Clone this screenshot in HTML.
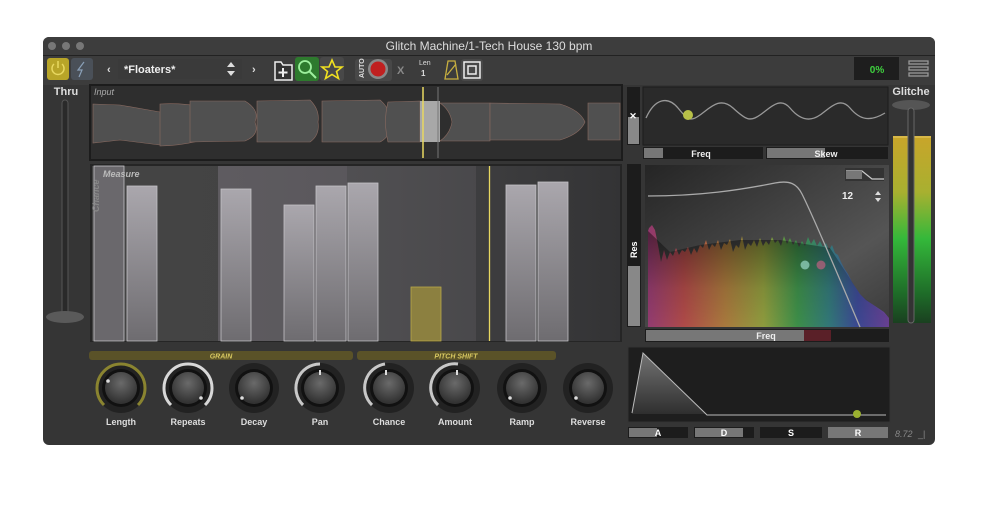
<!DOCTYPE html>
<html><head><style>
body{margin:0;background:#fff;width:987px;height:511px;overflow:hidden}
svg{display:block}
text{font-family:"Liberation Sans",sans-serif}
</style></head><body>
<svg width="987" height="511" viewBox="0 0 987 511">
<defs>
<linearGradient id="rb" x1="0" x2="1" y1="0" y2="0">
<stop offset="0" stop-color="#a03a78"/><stop offset=".15" stop-color="#c04a48"/><stop offset=".32" stop-color="#b8803a"/><stop offset=".48" stop-color="#98a83a"/><stop offset=".62" stop-color="#3a9a48"/><stop offset=".75" stop-color="#2e8080"/><stop offset=".87" stop-color="#3a48a0"/><stop offset="1" stop-color="#7040a0"/>
</linearGradient>
<linearGradient id="rbf" x1="0" x2="0" y1="0" y2="1"><stop offset="0" stop-color="#000" stop-opacity=".45"/><stop offset=".6" stop-color="#000" stop-opacity=".1"/><stop offset="1" stop-color="#000" stop-opacity="0"/></linearGradient>
<linearGradient id="meter" x1="0" x2="0" y1="0" y2="1"><stop offset="0" stop-color="#c9a52a"/><stop offset=".3" stop-color="#a8b030"/><stop offset=".55" stop-color="#34b83a"/><stop offset=".85" stop-color="#1e6a28"/><stop offset="1" stop-color="#1a4020"/></linearGradient>
<linearGradient id="bar" x1="0" x2="0" y1="0" y2="1"><stop offset="0" stop-color="#aaa7ad"/><stop offset="1" stop-color="#6e6c70"/></linearGradient>
<linearGradient id="filt" x1="0" x2="1" y1="0" y2="1"><stop offset="0" stop-color="#252525"/><stop offset=".7" stop-color="#555"/><stop offset="1" stop-color="#3a3a3a"/></linearGradient>
<radialGradient id="kn" cx=".5" cy=".35" r=".6"><stop offset="0" stop-color="#6a6a6a"/><stop offset="1" stop-color="#333"/></radialGradient>
<linearGradient id="adsr" x1="0" x2="0" y1="0" y2="1"><stop offset="0" stop-color="#888"/><stop offset="1" stop-color="#333"/></linearGradient>
<linearGradient id="seg" x1="0" x2="1" y1="0" y2="0"><stop offset="0" stop-color="#fff" stop-opacity=".06"/><stop offset="1" stop-color="#000" stop-opacity=".15"/></linearGradient>
</defs>
<rect x="43" y="37" width="892" height="408" rx="6" fill="#353535"/>
<rect x="43" y="37" width="892" height="18" rx="6" fill="#3d3d3d"/>
<rect x="43" y="50" width="892" height="5" fill="#3d3d3d"/>
<line x1="43" y1="55.5" x2="935" y2="55.5" stroke="#222"/>
<circle cx="52" cy="46" r="4" fill="#777"/><circle cx="66" cy="46" r="4" fill="#777"/><circle cx="80" cy="46" r="4" fill="#777"/>
<text x="489" y="50" font-size="12" fill="#ddd" text-anchor="middle">Glitch Machine/1-Tech House 130 bpm</text>
<rect x="43" y="56" width="892" height="29" fill="#3c3c3c"/>
<rect x="47" y="58" width="22" height="22" rx="3" fill="#b8a528"/>
<path d="M54 64 A6 6 0 1 0 62 64" fill="none" stroke="#e8d860" stroke-width="1.5"/><line x1="58" y1="61" x2="58" y2="68" stroke="#e8d860" stroke-width="1.5"/>
<rect x="71" y="58" width="22" height="22" rx="3" fill="#4a5058"/>
<path d="M84 62 L78 70 L82 70 L79 77" fill="none" stroke="#8aa0b8" stroke-width="1.2"/>
<text x="107" y="73" font-size="11" fill="#ddd" font-weight="bold">‹</text>
<rect x="118" y="59" width="124" height="20" fill="#3a3a3a"/>
<text x="124" y="73" font-size="11" fill="#eee" font-weight="bold">*Floaters*</text>
<path d="M227 67 L231 62 L235 67Z M227 71 L231 76 L235 71Z" fill="#ddd"/>
<text x="252" y="73" font-size="11" fill="#ddd" font-weight="bold">›</text>
<path d="M275 62 h6 l2 3 h9 v15 h-17z" fill="#333" stroke="#eee" stroke-width="1.5"/>
<path d="M283 68 v9 M278.5 72.5 h9" stroke="#eee" stroke-width="2"/>
<rect x="295" y="57" width="24" height="24" rx="3" fill="#2e7a2e"/>
<circle cx="305" cy="67" r="6" fill="none" stroke="#9ef09e" stroke-width="1.8"/><line x1="309" y1="71" x2="316" y2="78" stroke="#9ef09e" stroke-width="2"/>
<rect x="320" y="57" width="24" height="24" rx="3" fill="#484848"/>
<path d="M332 60 L335 67 L342 67 L336.5 71.5 L338.5 78.5 L332 74.5 L325.5 78.5 L327.5 71.5 L322 67 L329 67Z" fill="none" stroke="#f0e020" stroke-width="1.6"/>
<rect x="355" y="59" width="37" height="22" rx="3" fill="#484848"/>
<text x="0" y="0" font-size="7" fill="#ddd" font-weight="bold" transform="translate(364 78) rotate(-90)">AUTO</text>
<circle cx="378" cy="69" r="10" fill="#888"/><circle cx="378" cy="69" r="7.5" fill="#c02020"/>
<text x="397" y="74" font-size="11" fill="#888" font-weight="bold">X</text>
<text x="419" y="65" font-size="7" fill="#ddd">Len</text><text x="421" y="76" font-size="8" fill="#ddd" font-weight="bold">1</text>
<path d="M448 61 L455 61 L458 79 L445 79Z M447 75 L456 64" fill="none" stroke="#c8b040" stroke-width="1.3"/>
<rect x="461" y="59" width="22" height="22" rx="3" fill="#484848"/>
<rect x="464" y="62" width="16" height="16" fill="none" stroke="#eee" stroke-width="1.5"/><rect x="468" y="66" width="8" height="8" fill="none" stroke="#eee" stroke-width="1.5"/>
<rect x="854" y="57" width="45" height="23" fill="#1e1e1e"/>
<text x="877" y="73" font-size="10" fill="#3fd23f" text-anchor="middle" font-weight="bold">0%</text>
<g fill="none" stroke="#999" stroke-width="1.3"><rect x="909" y="61" width="19" height="3"/><rect x="909" y="67" width="19" height="3"/><rect x="909" y="73" width="19" height="3"/></g>
<text x="66" y="95" font-size="11" fill="#ddd" text-anchor="middle" font-weight="bold">Thru</text>
<rect x="62" y="100" width="6" height="222" rx="3" fill="#2a2a2a" stroke="#555"/>
<ellipse cx="65" cy="317" rx="19" ry="6" fill="#5a5a5a"/>
<rect x="90" y="85" width="532" height="75" fill="#2e2e2e" stroke="#1c1c1c" stroke-width="2"/>
<text x="94" y="95" font-size="9" fill="#aaa" font-style="italic">Input</text>
<g fill="#505050" stroke="#8a6a60" stroke-width="0.6">
<path d="M93 104 L120 105 L160 112 Q180 112 200 117 L220 122 L220 136 Q200 141 160 145 L120 140 L93 143Z"/>
<path d="M160 104 Q200 102 225 115 Q230 122 225 130 Q200 145 160 146Z"/>
<path d="M190 101 L245 101 Q260 110 255 122 Q260 135 245 141 L190 142Z"/>
<path d="M257 101 L310 100 Q320 110 318 122 Q320 135 310 142 L257 142Z"/>
<path d="M322 101 L380 100 Q392 110 388 122 Q392 136 380 142 L322 142Z"/>
<path d="M388 102 L420 101 L420 142 L388 142 Q383 122 388 102Z"/>
<path d="M440 103 Q450 110 452 122 Q450 134 440 141 L490 141 L490 103Z"/>
<path d="M490 103 L560 104 Q580 110 585 122 Q580 134 560 140 L490 140Z"/>
<path d="M588 103 L620 103 L620 140 L588 140Z"/>
</g>
<rect x="420" y="101" width="20" height="41" fill="#a8a8a8"/>
<line x1="423" y1="87" x2="423" y2="158" stroke="#e8d860" stroke-width="1.5"/>
<line x1="438" y1="87" x2="438" y2="158" stroke="#777"/>
<rect x="90" y="164" width="532" height="178" fill="#252525"/>
<rect x="92" y="166" width="126" height="175" fill="#383838"/>
<rect x="218" y="166" width="129" height="175" fill="#555257"/>
<rect x="347" y="166" width="129" height="175" fill="#4a494c"/>
<rect x="476" y="166" width="144" height="175" fill="#3c3c3e"/>
<rect x="92" y="166" width="528" height="175" fill="url(#seg)"/>
<g fill="url(#bar)" stroke="#c4c2c6" stroke-width="0.8">
<rect x="94" y="166" width="30" height="175" fill="#6a686c"/>
<rect x="127" y="186" width="30" height="155"/>
<rect x="221" y="189" width="30" height="152"/>
<rect x="284" y="205" width="30" height="136"/>
<rect x="316" y="186" width="30" height="155"/>
<rect x="348" y="183" width="30" height="158"/>
<rect x="506" y="185" width="30" height="156"/>
<rect x="538" y="182" width="30" height="159"/>
</g>
<rect x="411" y="287" width="30" height="54" fill="#8c8040" stroke="#b8a848" stroke-width="0.8"/>
<line x1="489.5" y1="166" x2="489.5" y2="341" stroke="#e8d860" stroke-width="1.3"/>
<text x="103" y="177" font-size="9" fill="#bbb" font-style="italic" font-weight="bold">Measure</text>
<text x="0" y="0" font-size="9" fill="#888" font-style="italic" font-weight="bold" transform="translate(99 212) rotate(-90)">Chance</text>
<rect x="89" y="351" width="264" height="9" rx="3" fill="#5a5228"/>
<text x="221" y="358.5" font-size="7" fill="#d8c860" text-anchor="middle" font-style="italic" font-weight="bold">GRAIN</text>
<rect x="357" y="351" width="199" height="9" rx="3" fill="#5a5228"/>
<text x="456" y="358.5" font-size="7" fill="#d8c860" text-anchor="middle" font-style="italic" font-weight="bold">PITCH SHIFT</text>
<g font-size="9" fill="#ddd" font-weight="bold" text-anchor="middle">
<g transform="translate(121 388)"><circle r="25" fill="#222"/><path d="M-17 17 A24 24 0 1 1 17 17" fill="none" stroke="#8a8430" stroke-width="3"/><circle r="19" fill="#111"/><circle r="16" fill="url(#kn)"/><circle cx="-13" cy="-7" r="1.8" fill="#ddd"/><text y="37">Length</text></g>
<g transform="translate(188 388)"><circle r="25" fill="#222"/><path d="M-17 17 A24 24 0 1 1 17 17" fill="none" stroke="#d8d8d8" stroke-width="3"/><circle r="19" fill="#111"/><circle r="16" fill="url(#kn)"/><circle cx="13" cy="10" r="1.8" fill="#ddd"/><text y="37">Repeats</text></g>
<g transform="translate(254 388)"><circle r="25" fill="#222"/><circle r="19" fill="#111"/><circle r="16" fill="url(#kn)"/><circle cx="-12" cy="10" r="1.8" fill="#ddd"/><text y="37">Decay</text></g>
<g transform="translate(320 388)"><circle r="25" fill="#222"/><path d="M-17 17 A24 24 0 0 1 0 -24" fill="none" stroke="#c8c8c8" stroke-width="3"/><circle r="19" fill="#111"/><circle r="16" fill="url(#kn)"/><rect x="-1" y="-18" width="2" height="5" fill="#ddd"/><text y="37">Pan</text></g>
<g transform="translate(389 388)"><circle r="25" fill="#222"/><path d="M-17 17 A24 24 0 0 1 -4 -24" fill="none" stroke="#c8c8c8" stroke-width="3"/><circle r="19" fill="#111"/><circle r="16" fill="url(#kn)"/><rect x="-4" y="-18" width="2" height="5" fill="#ddd"/><text y="37">Chance</text></g>
<g transform="translate(455 388)"><circle r="25" fill="#222"/><path d="M-17 17 A24 24 0 0 1 3 -24" fill="none" stroke="#c8c8c8" stroke-width="3"/><circle r="19" fill="#111"/><circle r="16" fill="url(#kn)"/><rect x="1" y="-18" width="2" height="5" fill="#ddd"/><text y="37">Amount</text></g>
<g transform="translate(522 388)"><circle r="25" fill="#222"/><circle r="19" fill="#111"/><circle r="16" fill="url(#kn)"/><circle cx="-12" cy="10" r="1.8" fill="#ddd"/><text y="37">Ramp</text></g>
<g transform="translate(588 388)"><circle r="25" fill="#222"/><circle r="19" fill="#111"/><circle r="16" fill="url(#kn)"/><circle cx="-12" cy="10" r="1.8" fill="#ddd"/><text y="37">Reverse</text></g>
</g>
<rect x="627" y="87" width="13" height="58" fill="#1c1c1c"/><rect x="628" y="117" width="11" height="27" fill="#888"/>
<text x="633" y="119" font-size="9" fill="#fff" text-anchor="middle" font-weight="bold">✕</text>
<rect x="643" y="87" width="245" height="58" fill="#2a2a2a" stroke="#1c1c1c"/>
<path d="M646 118 C655 98 668 96 678 108 S690 122 700 115 S720 96 733 108 S750 122 760 115 S780 96 790 108 S810 122 820 115 S840 96 850 108 S870 122 885 113" fill="none" stroke="#999" stroke-width="1.3"/>
<circle cx="688" cy="115" r="5" fill="#b8c048"/>
<rect x="643" y="147" width="120" height="12" fill="#1c1c1c"/><rect x="644" y="148" width="19" height="10" fill="#777"/>
<text x="701" y="157" font-size="9" fill="#eee" text-anchor="middle" font-weight="bold">Freq</text>
<rect x="766" y="147" width="122" height="12" fill="#1c1c1c"/><rect x="767" y="148" width="58" height="10" fill="#777"/>
<text x="826" y="157" font-size="9" fill="#eee" text-anchor="middle" font-weight="bold">Skew</text>
<rect x="627" y="164" width="14" height="163" fill="#1c1c1c"/><rect x="628" y="266" width="12" height="60" fill="#888"/>
<text x="0" y="0" font-size="9" fill="#fff" font-weight="bold" transform="translate(637 258) rotate(-90)">Res</text>
<rect x="645" y="165" width="244" height="162" fill="url(#filt)"/>
<path d="M648 231 L649 228 L652 225 L655 230 L658 245 L661 262 L664 250 L667 260 L670 252 L673 256 L676 248 L679 255 L682 250 L685 252 L688 247 L691 255 L694 248 L697 253 L700 245 L703 248 L706 240 L709 250 L712 244 L715 247 L718 240 L721 250 L724 243 L727 245 L730 239 L733 252 L736 245 L739 248 L742 236 L745 250 L748 243 L751 246 L754 240 L757 247 L760 238 L763 246 L766 241 L769 245 L772 237 L775 243 L778 240 L781 246 L784 236 L787 244 L790 238 L793 245 L796 240 L799 247 L802 241 L805 246 L808 237 L811 244 L814 239 L817 246 L820 241 L823 247 L826 243 L829 250 L832 245 L835 253 L838 255 L841 262 L844 268 L848 274 L852 282 L856 288 L860 294 L866 300 L872 304 L878 308 L884 312 L889 318 L889 327 L648 327Z" fill="url(#rb)" opacity=".85"/>
<path d="M648 231 L670 252 L700 245 L740 240 L780 240 L830 248 L860 294 L889 318 L889 327 L648 327Z" fill="url(#rbf)"/>
<path d="M648 196 C700 196 740 190 775 183 C790 180 797 184 802 194 C815 220 840 280 860 327" fill="none" stroke="#aaa" stroke-width="1.3"/>
<circle cx="805" cy="265" r="4.5" fill="#9ad8c8" opacity=".7"/><circle cx="821" cy="265" r="4.5" fill="#c06080" opacity=".7"/>
<rect x="845" y="168" width="39" height="13" fill="#333"/><path d="M846 171 L862 171 L872 179 L884 179" fill="none" stroke="#ccc" stroke-width="1.2"/><rect x="846" y="171" width="16" height="8" fill="#777"/>
<text x="842" y="199" font-size="10" fill="#eee" font-weight="bold">12</text>
<path d="M875 195 L878 191 L881 195Z M875 198 L878 202 L881 198Z" fill="#ddd"/>
<rect x="645" y="329" width="244" height="13" fill="#1c1c1c"/><rect x="646" y="330" width="158" height="11" fill="#777"/><rect x="804" y="330" width="27" height="11" fill="#5a2028"/>
<text x="766" y="339" font-size="9" fill="#eee" text-anchor="middle" font-weight="bold">Freq</text>
<rect x="628" y="347" width="262" height="75" fill="#1e1e1e" stroke="#333"/>
<path d="M632 413 L643 353 L707 414 L706 414 L632 414Z" fill="url(#adsr)" opacity=".8"/>
<path d="M632 413 L643 353 L707 415 L886 415" fill="none" stroke="#bbb" stroke-width="1"/>
<circle cx="857" cy="414" r="4" fill="#9ab030"/>
<g font-size="9" fill="#fff" font-weight="bold" text-anchor="middle">
<rect x="628" y="427" width="60" height="11" fill="#1c1c1c"/><rect x="629" y="428" width="28" height="9" fill="#777"/><text x="658" y="436">A</text>
<rect x="694" y="427" width="60" height="11" fill="#1c1c1c"/><rect x="695" y="428" width="48" height="9" fill="#777"/><text x="724" y="436">D</text>
<rect x="760" y="427" width="62" height="11" fill="#1c1c1c"/><text x="791" y="436">S</text>
<rect x="828" y="427" width="60" height="11" fill="#777"/><text x="858" y="436">R</text>
</g>
<text x="895" y="437" font-size="9" fill="#888" font-style="italic">8.72</text><text x="918" y="437" font-size="9" fill="#888">_|</text>
<text x="911" y="95" font-size="11" fill="#ddd" text-anchor="middle" font-weight="bold">Glitche</text>
<ellipse cx="911" cy="105" rx="19" ry="5" fill="#555"/>
<rect x="893" y="136" width="38" height="187" fill="url(#meter)"/>
<line x1="893" y1="137" x2="931" y2="137" stroke="#d8b848" stroke-width="2"/>
<rect x="908" y="108" width="6" height="215" rx="3" fill="#333" stroke="#666"/>
</svg>
</body></html>
